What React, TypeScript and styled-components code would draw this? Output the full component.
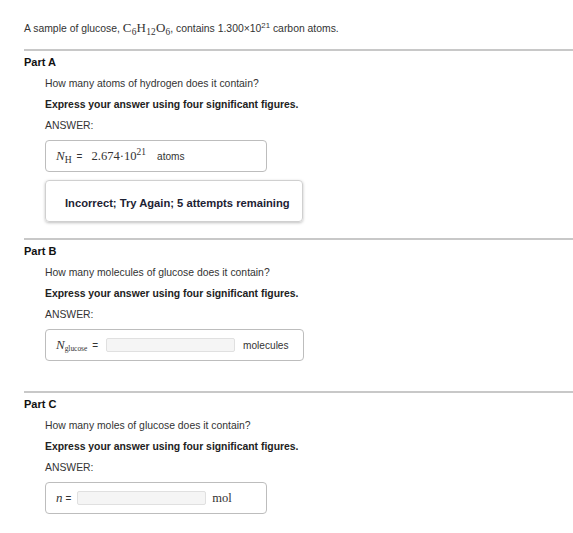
import styled, { createGlobalStyle } from 'styled-components'
import { ReactNode } from 'react'

const GlobalStyle = createGlobalStyle`
    html, body {
        margin: 0;
        padding: 0;
        background: #fff;
    }
    body {
        font-family: 'Liberation Sans', Arial, sans-serif;
        color: #333;
        font-size: 10.4px;
    }
`

const serif = "'Liberation Serif', 'Times New Roman', serif"

const Page = styled.div`
    padding: 20px 0 0 24px;
`

const Intro = styled.div`
    line-height: 16px;
    font-size: 10.4px;
    margin-bottom: 12px;
    white-space: nowrap;
`

const Sub = styled.sub<{ $size?: number }>`
    font-family: ${serif};
    font-size: ${(p) => (p.$size ? `${p.$size}px` : '0.72em')};
    vertical-align: -0.3em;
    line-height: 0;
`

const Sup = styled.sup`
    font-size: 0.75em;
    vertical-align: 0.5em;
    line-height: 0;
`

const Formula = styled.span`
    font-family: ${serif};
    font-size: 13px;
    letter-spacing: 0.2px;
    color: #333;
`

const Var = styled.i`
    font-family: ${serif};
    font-size: 13px;
`

const Section = styled.section<{ $bottom: number }>`
    border-top: 2px solid #c8c8c8;
    padding-bottom: ${(p) => p.$bottom}px;
`

const PartTitle = styled.h2`
    margin: 0;
    padding-top: 4px;
    font-size: 11px;
    line-height: 14px;
    font-weight: bold;
    color: #111;
`

const PartBody = styled.div`
    padding-left: 21px;
    padding-top: 4px;
`

const Line = styled.p<{ $bold?: boolean }>`
    margin: 0;
    line-height: 21px;
    font-size: 10.4px;
    white-space: nowrap;
    font-weight: ${(p) => (p.$bold ? 'bold' : 'normal')};
    color: ${(p) => (p.$bold ? '#222' : '#333')};
`

const AnswerBox = styled.div<{ $gap: number }>`
    display: inline-flex;
    align-items: center;
    min-width: 222px;
    box-sizing: border-box;
    height: 32px;
    margin-top: 4px;
    padding: 0 14px 0 10px;
    border: 1px solid #bdbdbd;
    border-radius: 4px;
    background: #fff;
    gap: ${(p) => p.$gap}px;
`

const Label = styled.span`
    display: inline-block;
    white-space: nowrap;
    line-height: 16px;
`

const Equals = styled.span<{ $space: number }>`
    font-size: 10px;
    margin-left: ${(p) => p.$space}px;
`

const Value = styled.span`
    font-family: ${serif};
    font-size: 12.6px;
    color: #333;
    margin-right: 2px;
`

const Unit = styled.span<{ $serif?: boolean }>`
    font-family: ${(p) => (p.$serif ? serif : "'Liberation Sans', Arial, sans-serif")};
    font-size: ${(p) => (p.$serif ? 12.5 : 10.1)}px;
    color: #333;
    white-space: nowrap;
`

const Input = styled.span`
    display: inline-block;
    width: 129px;
    height: 14px;
    box-sizing: border-box;
    background: #f5f5f5;
    border: 1px solid #e0e0e0;
    border-radius: 2px;
`

const Feedback = styled.div`
    display: flex;
    align-items: center;
    width: 258px;
    height: 42px;
    box-sizing: border-box;
    margin-top: 8px;
    padding: 3px 0 0 19px;
    border: 1px solid #d0d0d0;
    border-radius: 4px;
    box-shadow: 0 1px 3px rgba(0, 0, 0, 0.25);
    font-size: 11.2px;
    font-weight: bold;
    white-space: nowrap;
    color: #1d2233;
`

type PartProps = {
    title: string
    question: string
    bottom: number
    children: ReactNode
}

function Part({ title, question, bottom, children }: PartProps) {
    return (
        <Section $bottom={bottom}>
            <PartTitle>{title}</PartTitle>
            <PartBody>
                <Line>{question}</Line>
                <Line $bold>Express your answer using four significant figures.</Line>
                <Line>ANSWER:</Line>
                {children}
            </PartBody>
        </Section>
    )
}

export default function App() {
    return (
        <Page>
            <GlobalStyle />
            <Intro>
                A sample of glucose,{' '}
                <Formula>
                    C<Sub>6</Sub>H<Sub>12</Sub>O<Sub>6</Sub>
                </Formula>
                , contains 1.300×10<Sup>21</Sup> carbon atoms.
            </Intro>

            <Part title="Part A" question="How many atoms of hydrogen does it contain?" bottom={16}>
                <AnswerBox $gap={9}>
                    <Label>
                        <Var>N</Var>
                        <Sub $size={9.6}>H</Sub>
                        <Equals $space={5}>=</Equals>
                    </Label>
                    <Value>
                        2.674·10<Sup>21</Sup>
                    </Value>
                    <Unit>atoms</Unit>
                </AnswerBox>
                <Feedback>Incorrect; Try Again; 5 attempts remaining</Feedback>
            </Part>

            <Part title="Part B" question="How many molecules of glucose does it contain?" bottom={30}>
                <AnswerBox $gap={8}>
                    <Label>
                        <Var>N</Var>
                        <Sub $size={7.4}>glucose</Sub>
                        <Equals $space={5}>=</Equals>
                    </Label>
                    <Input />
                    <Unit>molecules</Unit>
                </AnswerBox>
            </Part>

            <Part title="Part C" question="How many moles of glucose does it contain?" bottom={20}>
                <AnswerBox $gap={6}>
                    <Label>
                        <Var>n</Var>
                        <Equals $space={3}>=</Equals>
                    </Label>
                    <Input />
                    <Unit $serif>mol</Unit>
                </AnswerBox>
            </Part>
        </Page>
    )
}
